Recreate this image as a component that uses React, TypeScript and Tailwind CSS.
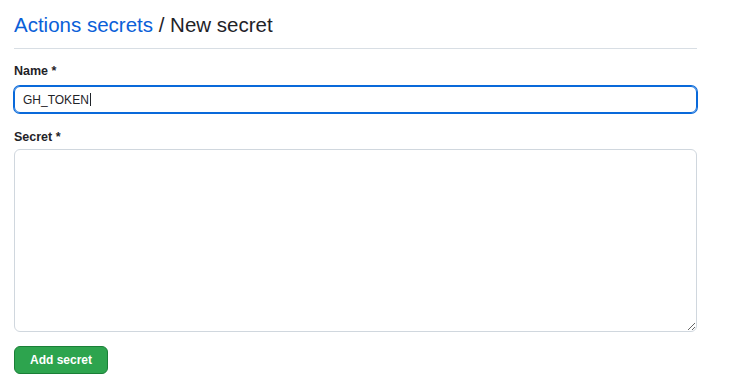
import React from 'react';

export default function App() {
  return (
    <div className="min-h-screen bg-white px-[14px] pt-[12px] text-[#1f2328]" style={{ fontFamily: '"Liberation Sans", Arial, sans-serif' }}>
      <div className="w-[683px]">
        <h2 className="pb-[10px] text-[20.5px] leading-[26px] border-b border-[#d8dee4]">
          <a className="text-[#0a60d8]">Actions secrets</a>
          <span> / New secret</span>
        </h2>

        <form className="pt-[13px]">
          <label className="block text-[12.5px] font-semibold leading-[18px]">Name *</label>
          <div className="mt-[6px] flex h-[27px] items-center rounded-[6px] border border-[#0969da] px-[8px] text-[12px] shadow-[0_0_0_1px_#0969da]">
            <span>GH_TOKEN</span>
            <span className="ml-[1px] h-[13px] w-px bg-[#1f2328]" />
          </div>

          <label className="mt-[15px] block text-[12.5px] font-semibold leading-[18px]">Secret *</label>
          <textarea
            readOnly
            className="mt-[3px] block h-[183px] w-full rounded-[6px] border border-[#d0d7de] bg-white outline-none"
          />

          <button
            type="button"
            className="mt-[14px] h-[28px] rounded-[6px] border border-[#1a7f37] bg-[#2da44e] px-[15px] text-[12px] font-semibold text-white"
          >
            Add secret
          </button>
        </form>
      </div>
    </div>
  );
}
